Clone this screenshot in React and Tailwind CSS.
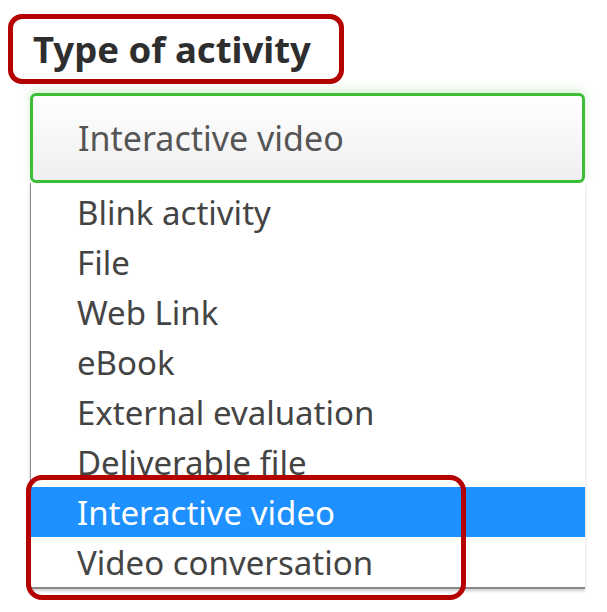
import React from 'react';

const options = [
  'Blink activity',
  'File',
  'Web Link',
  'eBook',
  'External evaluation',
  'Deliverable file',
  'Interactive video',
  'Video conversation'
];

const ActivityTypeSelect = ({ selected = 'Interactive video' }) => {
  return (
    <div className="relative pl-[8px] pt-[14px]">
      {/* Label, outlined in red */}
      <div className="w-[336px] h-[70px] border-[5px] border-[#b40000] rounded-[14px] flex items-center pl-[20px]">
        <span className="text-[36.5px] leading-none font-bold text-[#2e2e2e]">Type of activity</span>
      </div>

      {/* Select box */}
      <div className="ml-[22px] mt-[9px] w-[555px]">
        <div className="h-[90px] border-[3px] border-[#3cbf37] rounded-[6px] bg-gradient-to-b from-white to-[#efefef] shadow-[0_-4px_8px_rgba(120,200,100,0.25)] flex items-center pl-[45px]">
          <span className="text-[34px] leading-none text-[#555]">{selected}</span>
        </div>

        {/* Dropdown list */}
        <div className="border-l border-[#8a8a8a] border-b-2 border-b-[#888] bg-white pt-[4px] shadow-[0_2px_3px_rgba(0,0,0,0.2)]">
          {options?.map((option) => (
            <div
              key={option}
              className={`h-[50px] flex items-center pl-[46px] pt-[1px] text-[33px] leading-none ${
                option === selected ? 'bg-[#1e90ff] text-white' : 'text-[#444]'
              }`}
            >
              {option}
            </div>
          ))}
        </div>
      </div>

      {/* Red outline over the last two options */}
      <div className="absolute left-[26px] top-[475px] w-[440px] h-[125px] border-[5px] border-[#b40000] rounded-[16px] pointer-events-none" />
    </div>
  );
};

export default function App() {
  return (
    <div className="w-[607px] h-[612px] bg-white overflow-hidden" style={{ fontFamily: '"Noto Sans", "Open Sans", sans-serif' }}>
      <ActivityTypeSelect />
    </div>
  );
}
